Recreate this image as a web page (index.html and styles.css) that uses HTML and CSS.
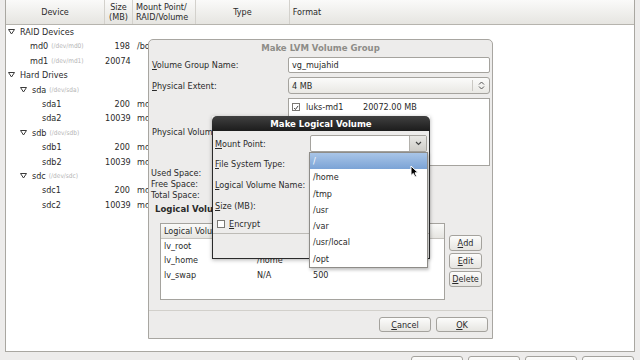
FILE: index.html
```html
<!DOCTYPE html>
<html>
<head>
    <title>Partitioning</title>
    <link rel="stylesheet" href="styles.css">
</head>
<body>
    <div class="tree">
        <div class="tree-header">
            <div class="col col-device">Device</div>
            <div class="col col-size">Size<br>(MB)</div>
            <div class="col col-mount">Mount Point/<br>RAID/Volume</div>
            <div class="col col-type">Type</div>
            <div class="col col-format">Format</div>
            <div class="col col-fill"></div>
        </div>
        <div class="tree-body">
            <div class="row"><span class="name lvl0"><svg class="expander" width="12" height="8" viewBox="0 0 12 8"><path d="M0.5 1.5 H6.5 L3.5 6 Z"/></svg>RAID Devices</span></div>
            <div class="row"><span class="name leaf1">md0<small>(/dev/md0)</small></span><span class="size">198</span><span class="mount">/boot</span></div>
            <div class="row"><span class="name leaf1">md1<small>(/dev/md1)</small></span><span class="size">20074</span><span class="mount"></span></div>
            <div class="row"><span class="name lvl0"><svg class="expander" width="12" height="8" viewBox="0 0 12 8"><path d="M0.5 1.5 H6.5 L3.5 6 Z"/></svg>Hard Drives</span></div>
            <div class="row"><span class="name lvl1"><svg class="expander" width="12" height="8" viewBox="0 0 12 8"><path d="M0.5 1.5 H6.5 L3.5 6 Z"/></svg>sda<small>(/dev/sda)</small></span></div>
            <div class="row"><span class="name leaf2">sda1</span><span class="size">200</span><span class="mount">md0</span></div>
            <div class="row"><span class="name leaf2">sda2</span><span class="size">10039</span><span class="mount">md1</span></div>
            <div class="row"><span class="name lvl1"><svg class="expander" width="12" height="8" viewBox="0 0 12 8"><path d="M0.5 1.5 H6.5 L3.5 6 Z"/></svg>sdb<small>(/dev/sdb)</small></span></div>
            <div class="row"><span class="name leaf2">sdb1</span><span class="size">200</span><span class="mount">md0</span></div>
            <div class="row"><span class="name leaf2">sdb2</span><span class="size">10039</span><span class="mount">md1</span></div>
            <div class="row"><span class="name lvl1"><svg class="expander" width="12" height="8" viewBox="0 0 12 8"><path d="M0.5 1.5 H6.5 L3.5 6 Z"/></svg>sdc<small>(/dev/sdc)</small></span></div>
            <div class="row"><span class="name leaf2">sdc1</span><span class="size">200</span><span class="mount">md0</span></div>
            <div class="row"><span class="name leaf2">sdc2</span><span class="size">10039</span><span class="mount">md1</span></div>
        </div>
    </div>

    <div class="actions">
        <div class="btn">&nbsp;</div>
        <div class="btn">&nbsp;</div>
        <div class="btn">&nbsp;</div>
        <div class="btn">&nbsp;</div>
    </div>

    <div class="lvm-dialog">
        <div class="lvm-title">Make LVM Volume Group</div>
        <div class="lvm-form">
            <div class="label"><u>V</u>olume Group Name:</div>
            <div class="entry">vg_mujahid</div>
            <div class="label"><u>P</u>hysical Extent:</div>
            <div class="combo">4 MB
                <span class="spin-sep"></span>
                <svg class="spin" width="7" height="9" viewBox="0 0 7 9"><path d="M1 3.5 L3.5 1 L6 3.5 M1 5.5 L3.5 8 L6 5.5"/></svg>
            </div>
            <div class="label">Physical Volumes to <u>U</u>se:</div>
            <div class="pv-list">
                <div class="pv-row">
                    <span class="check checked"><svg width="8" height="8" viewBox="0 0 8 8"><path d="M1.5 4 L3.3 6 L6.8 1.2"/></svg></span>
                    <span class="pv-name">luks-md1</span>
                    <span>20072.00 MB</span>
                </div>
            </div>
        </div>
        <div class="space">
            <div>Used Space:</div>
            <div>Free Space:</div>
            <div>Total Space:</div>
        </div>
        <div class="lv-heading">Logical Volumes</div>
        <div class="lv-frame">
            <div class="lv-list">
                <div class="lv-head">
                    <span class="lv-name">Logical Volume Name</span>
                    <span class="lv-mount"></span>
                    <span class="lv-size"></span>
                </div>
                <div class="lv-row"><span class="lv-name">lv_root</span><span class="lv-mount"></span><span class="lv-size"></span></div>
                <div class="lv-row"><span class="lv-name">lv_home</span><span class="lv-mount">/home</span><span class="lv-size"></span></div>
                <div class="lv-row"><span class="lv-name">lv_swap</span><span class="lv-mount">N/A</span><span class="lv-size">500</span></div>
            </div>
            <div class="lv-buttons">
                <div class="btn"><u>A</u>dd</div>
                <div class="btn"><u>E</u>dit</div>
                <div class="btn"><u>D</u>elete</div>
            </div>
        </div>
        <div class="dialog-buttons">
            <div class="btn wide"><u>C</u>ancel</div>
            <div class="btn wide"><u>O</u>K</div>
        </div>
    </div>

    <div class="lv-dialog">
        <div class="lv-titlebar">Make Logical Volume</div>
        <div class="lv-body">
            <div class="lv-form">
                <div class="label"><u>M</u>ount Point:</div>
                <div class="combo-entry">
                    <span class="combo-text"></span>
                    <span class="combo-arrow"><svg width="7" height="5" viewBox="0 0 7 5"><path d="M1 1 L3.5 3.5 L6 1"/></svg></span>
                </div>
                <div class="label"><u>F</u>ile System Type:</div>
                <div class="entry"></div>
                <div class="label"><u>L</u>ogical Volume Name:</div>
                <div class="entry"></div>
                <div class="label"><u>S</u>ize (MB):</div>
                <div class="entry"></div>
            </div>
            <div class="encrypt"><span class="check"></span><span><u>E</u>ncrypt</span></div>
            <div class="lv-button-area"></div>
        </div>
    </div>

    <div class="popup">
        <div class="popup-item selected">/</div>
        <div class="popup-item">/home</div>
        <div class="popup-item">/tmp</div>
        <div class="popup-item">/usr</div>
        <div class="popup-item">/var</div>
        <div class="popup-item">/usr/local</div>
        <div class="popup-item">/opt</div>
    </div>

    <svg class="cursor" width="10" height="13" viewBox="0 0 10 13"><path d="M1 1 L1 10.5 L3.3 8.4 L5 12 L6.6 11.3 L5 7.8 L8.2 7.8 Z"/></svg>
</body>
</html>
```

FILE: styles.css
```css
body {
    margin: 0;
    width: 640px;
    height: 360px;
    overflow: hidden;
    position: relative;
    background-color: #edeceb;
    font-family: "DejaVu Sans Condensed", "DejaVu Sans", sans-serif;
    font-stretch: condensed;
    font-size: 9px;
    color: #2a2a2a;
}
* {
    box-sizing: border-box;
}

/* main device tree */
.tree {
    margin-left: 5px;
    width: 630px;
    height: 352px;
    background-color: #ffffff;
    border: 1px solid #a9a7a1;
    border-top: none;
}
.tree-header {
    display: flex;
    height: 25px;
    background: linear-gradient(#fafaf9, #e6e5e1);
    border-bottom: 1px solid #b6b4ae;
}
.tree-header .col {
    display: flex;
    align-items: center;
    justify-content: center;
    text-align: center;
    line-height: 10px;
    border-right: 1px solid #d3d1cc;
}
.col-device {
    width: 99px;
}
.col-size {
    width: 28px;
}
.col-mount {
    width: 63px;
    text-align: left !important;
    justify-content: flex-start !important;
    padding-left: 3px;
}
.col-type {
    width: 94px;
}
.col-format {
    width: 34px;
    border-right: none !important;
}
.col-fill {
    flex: 1;
    border-right: none !important;
}
.row {
    display: flex;
    height: 14.4px;
    line-height: 14.4px;
    white-space: nowrap;
}
.name {
    width: 99px;
    display: flex;
    align-items: center;
}
.name small {
    font-size: 6.5px;
    color: #b5b5b5;
    margin-left: 3px;
}
.lvl0 {
    padding-left: 2px;
}
.lvl1 {
    padding-left: 14px;
}
.leaf1 {
    padding-left: 24px;
}
.leaf2 {
    padding-left: 36px;
}
.expander {
    flex: none;
}
.expander path {
    fill: #ffffff;
    stroke: #3a3a3a;
    stroke-width: 1;
}
.size {
    width: 25px;
    text-align: right;
}
.mount {
    padding-left: 7px;
}

/* buttons */
.btn {
    display: flex;
    align-items: center;
    justify-content: center;
    height: 16px;
    border: 1px solid #a4a29d;
    border-radius: 3px;
    background: linear-gradient(#fcfcfb, #e6e5e1);
}
.actions {
    display: flex;
    justify-content: flex-end;
    gap: 5px;
    margin-top: 4px;
    padding-right: 6px;
}
.actions .btn {
    width: 52px;
    height: 20px;
}

/* LVM volume group dialog (inactive) */
.lvm-dialog {
    position: absolute;
    left: 148px;
    top: 39px;
    width: 345px;
    height: 300px;
    background-color: #edeceb;
    border: 1px solid #a8a6a1;
    border-radius: 5px 5px 0 0;
}
.lvm-title {
    height: 15px;
    line-height: 16px;
    text-align: center;
    font-weight: bold;
    font-size: 9.5px;
    color: #8d8c88;
}
.lvm-form {
    display: grid;
    grid-template-columns: 136px 202px;
    grid-template-rows: 16px 17px 68px;
    row-gap: 4px;
    margin-top: 2px;
    padding-left: 3px;
}
.label {
    align-self: center;
    white-space: nowrap;
}
.entry {
    display: flex;
    align-items: center;
    padding-left: 3px;
    background-color: #ffffff;
    border: 1px solid #a5a39e;
    border-radius: 2px;
}
.combo {
    display: flex;
    align-items: center;
    padding-left: 3px;
    border: 1px solid #a5a39e;
    border-radius: 3px;
    background: linear-gradient(#fbfbfa, #e9e8e4);
}
.spin-sep {
    margin-left: auto;
    width: 1px;
    height: 11px;
    background-color: #cac8c3;
}
.spin {
    margin: 0 4px 0 5px;
}
.spin path {
    fill: none;
    stroke: #555;
    stroke-width: 1;
}
.pv-list {
    background-color: #ffffff;
    border: 1px solid #a5a39e;
    padding: 1px 0 0 3px;
}
.pv-row {
    display: flex;
    align-items: center;
    height: 14px;
}
.pv-name {
    width: 57px;
    margin-left: 6px;
}
.check {
    display: inline-flex;
    width: 8px;
    height: 8px;
    border: 1px solid #7a7874;
    background-color: #ffffff;
    flex: none;
}
.check svg {
    display: block;
}
.check path {
    fill: none;
    stroke: #333;
    stroke-width: 1.2;
}
.space {
    line-height: 11px;
    margin-top: 2px;
    padding-left: 2px;
}
.lv-heading {
    height: 15px;
    line-height: 15px;
    padding-left: 6px;
    font-weight: bold;
    font-size: 9.5px;
}
.lv-frame {
    display: flex;
    align-items: flex-start;
    padding: 7px 0 10px 11px;
    border-bottom: 1px solid #d2d0cb;
}
.lv-list {
    width: 285px;
    height: 77px;
    background-color: #ffffff;
    border: 1px solid #a5a39e;
}
.lv-head {
    display: flex;
    height: 15px;
    line-height: 14px;
    background: linear-gradient(#fafaf9, #e6e5e1);
    border-bottom: 1px solid #c4c2bd;
}
.lv-row {
    display: flex;
    height: 14.4px;
    line-height: 14.4px;
}
.lv-name {
    width: 96px;
    padding-left: 3px;
    white-space: nowrap;
    overflow: hidden;
}
.lv-mount {
    width: 56px;
    white-space: nowrap;
}
.lv-head .lv-name,
.lv-head .lv-mount {
    border-right: 1px solid #d3d1cc;
}
.lv-buttons {
    display: flex;
    flex-direction: column;
    gap: 2px;
    width: 33px;
    margin: 12px 0 0 4px;
}
.dialog-buttons {
    display: flex;
    justify-content: flex-end;
    gap: 5px;
    padding: 6px 4px 0 0;
}
.dialog-buttons .btn {
    width: 52px;
    height: 15px;
}

/* make logical volume dialog (active) */
.lv-dialog {
    position: absolute;
    left: 212px;
    top: 116px;
    width: 218px;
    box-shadow: 0 1px 4px rgba(0, 0, 0, 0.3);
}
.lv-titlebar {
    height: 15px;
    line-height: 16px;
    text-align: center;
    font-weight: bold;
    font-size: 9.5px;
    color: #ffffff;
    background: linear-gradient(#404040, #1c1c1c);
    border-radius: 5px 5px 0 0;
}
.lv-body {
    background-color: #edeceb;
    border: 1px solid #2a2a2a;
    border-top: none;
}
.lv-form {
    display: grid;
    grid-template-columns: 95px 117px;
    grid-auto-rows: 17px;
    row-gap: 3.7px;
    padding: 4px 2px 0 2px;
}
.combo-entry {
    display: flex;
    background-color: #ffffff;
    border: 1px solid #a5a39e;
    border-radius: 2px;
}
.combo-text {
    flex: 1;
}
.combo-arrow {
    display: flex;
    align-items: center;
    justify-content: center;
    width: 17px;
    background: linear-gradient(#e9e8e5, #cfcdc8);
    border-left: 1px solid #b3b1ac;
}
.combo-arrow path {
    fill: none;
    stroke: #444;
    stroke-width: 1.2;
}
.encrypt {
    display: flex;
    align-items: center;
    gap: 4px;
    height: 14px;
    margin-top: 3px;
    padding-left: 4px;
}
.lv-button-area {
    height: 25px;
    margin-top: 2px;
    border-top: 1px solid #bdbbb6;
}

/* dropdown list */
.popup {
    position: absolute;
    left: 309px;
    top: 152px;
    width: 119px;
    background-color: #ffffff;
    border: 1px solid #8e8c88;
    box-shadow: 1px 2px 3px rgba(0, 0, 0, 0.25);
}
.popup-item {
    height: 16.3px;
    line-height: 16.3px;
    padding-left: 3px;
}
.popup-item.selected {
    background: linear-gradient(#a9c5e7, #7ba3d6);
    color: #ffffff;
}
.cursor {
    position: absolute;
    left: 410px;
    top: 165px;
}
.cursor path {
    fill: #000000;
    stroke: #ffffff;
    stroke-width: 1;
}
```
